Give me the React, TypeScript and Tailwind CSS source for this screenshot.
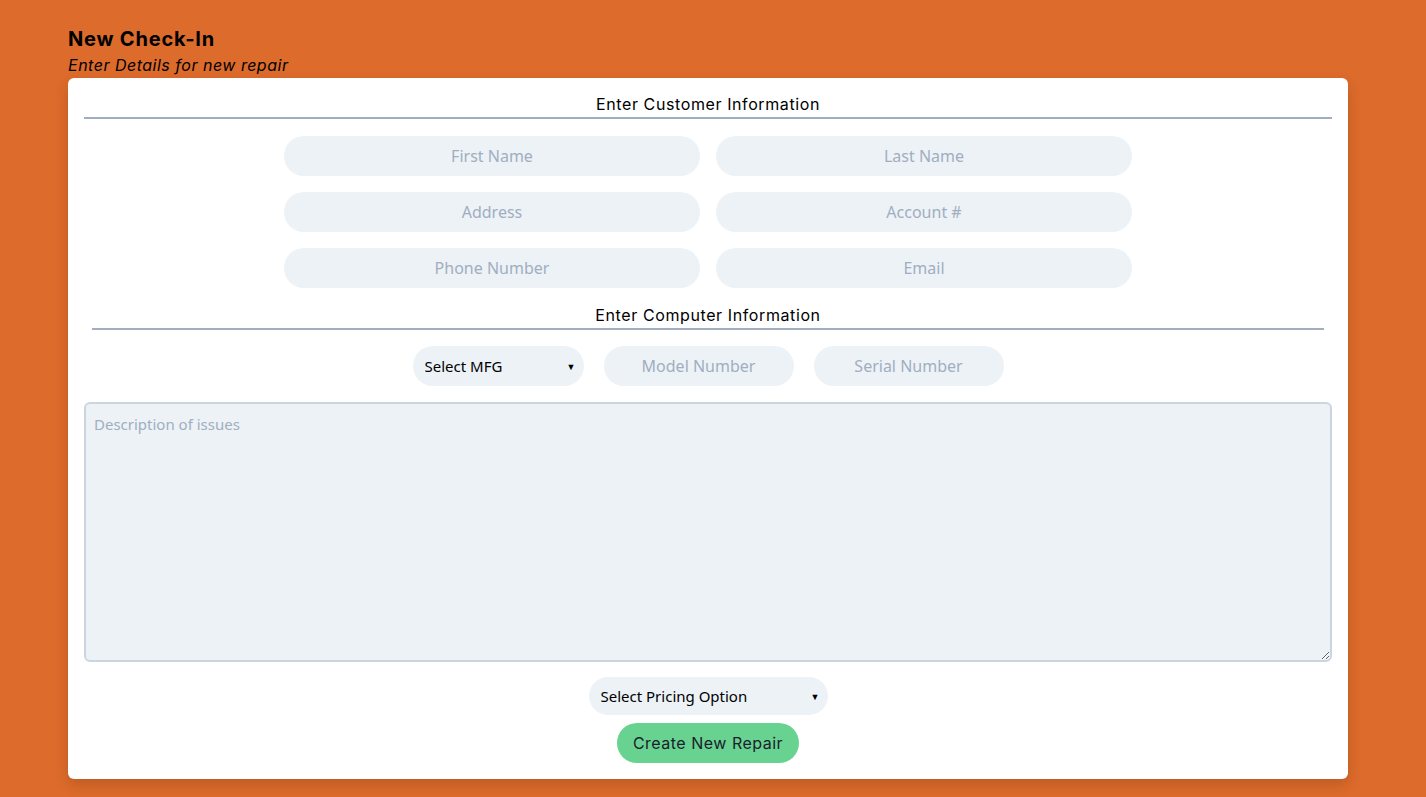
import React from "react";

const inputCls =
  "h-10 rounded-full bg-[#edf2f7] text-center text-[16px] text-[#1a202c] placeholder:text-[#a0aec0] outline-none";

function Arrow() {
  return (
    <span className="pointer-events-none absolute right-[8px] top-1/2 -translate-y-1/2 text-[9px] leading-none text-black">
      ▼
    </span>
  );
}

export default function App() {
  const seg = { fontFamily: '"Noto Sans", "Open Sans", sans-serif' } as React.CSSProperties;
  return (
    <div className="min-h-[797px] w-full bg-[#dd6b2b] pl-[68px] pr-[78px] pt-[27px]" style={{ fontFamily: 'Inter, "Noto Sans", sans-serif' }}>
      <h1 className="text-[20px] font-bold leading-[24px] text-black tracking-[0.8px]">New Check-In</h1>
      <p className="mt-[3px] text-[16px] italic leading-[22px] text-black tracking-[0.5px]">Enter Details for new repair</p>
      <div className="mt-[2px] rounded-[6px] bg-white px-4 pb-[16px] pt-[16px] shadow-[0_6px_14px_rgba(0,0,0,0.15)]">
        <div className="text-center text-[16px] leading-[20px] text-black tracking-[0.6px]">Enter Customer Information</div>
        <div className="mt-[3px] h-[2px] bg-[#a0aec0]" />
        <div className="mx-auto mt-[17px] grid w-[848px] grid-cols-2 gap-4" style={seg}>
          <input className={inputCls} placeholder="First Name" />
          <input className={inputCls} placeholder="Last Name" />
          <input className={inputCls} placeholder="Address" />
          <input className={inputCls} placeholder="Account #" />
          <input className={inputCls} placeholder="Phone Number" />
          <input className={inputCls} placeholder="Email" />
        </div>
        <div className="mt-[17px] text-center text-[16px] leading-[20px] text-black tracking-[0.6px]">Enter Computer Information</div>
        <div className="mx-2 mt-[3px] h-[2px] bg-[#a0aec0]" />
        <div className="mt-[16px] flex justify-center gap-[20px]" style={seg}>
          <div className="relative w-[171px]">
            <select className="h-10 w-full appearance-none rounded-full bg-[#edf2f7] pl-3 text-[15px] text-black outline-none">
              <option>Select MFG</option>
            </select>
            <Arrow />
          </div>
          <input className={`${inputCls} w-[190px]`} placeholder="Model Number" />
          <input className={`${inputCls} w-[190px]`} placeholder="Serial Number" />
        </div>
        <textarea
          className="mt-[16px] block h-[260px] w-full rounded-[6px] border-2 border-[#cbd5e0] bg-[#edf2f7] px-[8px] py-[10px] text-[15px] leading-[20px] placeholder:text-[#a0aec0] outline-none"
          style={seg}
          placeholder="Description of issues"
        />
        <div className="mt-[15px] flex justify-center" style={seg}>
          <div className="relative w-[239px]">
            <select className="h-[38px] w-full appearance-none rounded-full bg-[#edf2f7] pl-3 text-[15px] text-black outline-none">
              <option>Select Pricing Option</option>
            </select>
            <Arrow />
          </div>
        </div>
        <div className="mt-[8px] flex justify-center">
          <button className="h-10 w-[182px] rounded-full bg-[#68d391] text-[16px] text-[#1a202c] tracking-[0.5px]">Create New Repair</button>
        </div>
      </div>
    </div>
  );
}
